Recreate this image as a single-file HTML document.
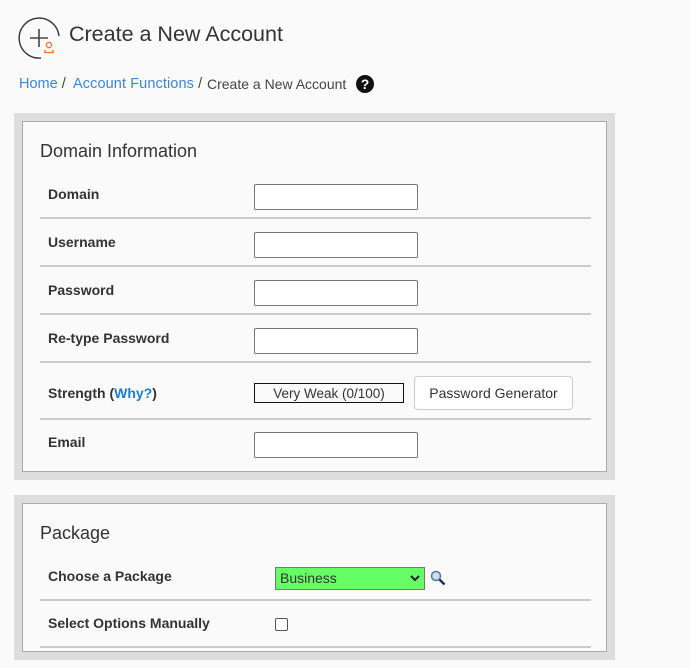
<!DOCTYPE html>
<html><head><style>
body{margin:0;background:#fafafa;font-family:"Liberation Sans",sans-serif;width:690px;height:668px;position:relative;overflow:hidden;color:#333}
.a{position:absolute}
.outer{position:absolute;left:14px;width:601px;background:#ddd}
.inner{position:absolute;left:8px;right:8px;top:8px;bottom:8px;border:1px solid #aaa;background:#fafafa}
.lbl{position:absolute;left:48px;font-size:14px;font-weight:bold;color:#333}
.inp{position:absolute;left:254px;width:162px;height:24px;border:1px solid #777;border-radius:2px;background:#fff}
.hr{position:absolute;left:40px;width:551px;height:2px;background:#ccc}
.bc{position:absolute;top:76px;font-size:14.5px;color:#444;white-space:nowrap}
</style></head><body>
<svg class="a" style="left:17px;top:15px" width="46" height="46" viewBox="0 0 46 46"><path d="M42 21 A20 20 0 1 0 24 43" fill="none" stroke="#333" stroke-width="1.4"/><path d="M22 14v18M13 23h18" stroke="#444" stroke-width="1.6"/><circle cx="32" cy="30" r="2.6" fill="none" stroke="#f26b2a" stroke-width="1.3"/><path d="M28 35v2.5h8V35" fill="none" stroke="#f26b2a" stroke-width="1.3"/></svg>
<div class="a" style="left:69px;top:22px;font-size:21.5px;color:#333">Create a New Account</div>
<div class="bc" style="left:19px"><span style="color:#3a87d6">Home</span> /</div>
<div class="bc" style="left:73px;letter-spacing:0.1px"><span style="color:#3a87d6">Account Functions</span> /</div>
<div class="bc" style="left:207px;font-size:14px;top:76px">Create a New Account</div>
<div class="a" style="left:356px;top:75px;width:18px;height:18px;border-radius:50%;background:#111;color:#fff;font-weight:bold;font-size:14px;text-align:center;line-height:18px">?</div>

<div class="outer" style="top:113px;height:367px"><div class="inner"></div></div>
<div class="a" style="left:40px;top:141px;font-size:18px;color:#333">Domain Information</div>
<div class="lbl" style="top:186px">Domain</div><div class="inp" style="top:184px"></div><div class="hr" style="top:217px"></div>
<div class="lbl" style="top:234px">Username</div><div class="inp" style="top:232px"></div><div class="hr" style="top:265px"></div>
<div class="lbl" style="top:282px">Password</div><div class="inp" style="top:280px"></div><div class="hr" style="top:313px"></div>
<div class="lbl" style="top:330px">Re-type Password</div><div class="inp" style="top:328px"></div><div class="hr" style="top:361px"></div>
<div class="lbl" style="top:385px">Strength (<span style="color:#1a7fd0">Why?</span>)</div>
<div class="a" style="left:254px;top:383px;width:148px;height:18px;border:1px solid #111;background:#fafafa;font-size:13.5px;text-align:center;line-height:19px">Very Weak (0/100)</div>
<div class="a" style="left:414px;top:376px;width:157px;height:32px;border:1px solid #ccc;border-radius:4px;background:#fff;font-size:14px;text-align:center;line-height:32px">Password Generator</div>
<div class="hr" style="top:418px"></div>
<div class="lbl" style="top:434px">Email</div><div class="inp" style="top:432px"></div>

<div class="outer" style="top:495px;height:165px"><div class="inner"></div></div>
<div class="a" style="left:40px;top:523px;font-size:18px;color:#333">Package</div>
<div class="lbl" style="top:568px">Choose a Package</div>
<div class="a" style="left:275px;top:567px;width:148px;height:21px;border:1px solid #777;background:#66ff66;font-size:14px;line-height:21px;color:#333;text-indent:4px">Business<svg style="position:absolute;right:4px;top:7px" width="10" height="7" viewBox="0 0 10 7"><path d="M1 1l4 4 4-4" fill="none" stroke="#222" stroke-width="2"/></svg></div>
<svg class="a" style="left:430px;top:570px" width="16" height="16" viewBox="0 0 16 16"><circle cx="6" cy="6" r="4.5" fill="#cde" stroke="#579" stroke-width="1.5"/><path d="M9.5 9.5l5 5" stroke="#235" stroke-width="2.5"/></svg>
<div class="hr" style="top:599px"></div>
<div class="lbl" style="top:615px">Select Options Manually</div>
<div class="a" style="left:275px;top:618px;width:11px;height:11px;border:1px solid #555;border-radius:2px;background:#fff"></div>
<div class="hr" style="top:646px"></div>
</body></html>
